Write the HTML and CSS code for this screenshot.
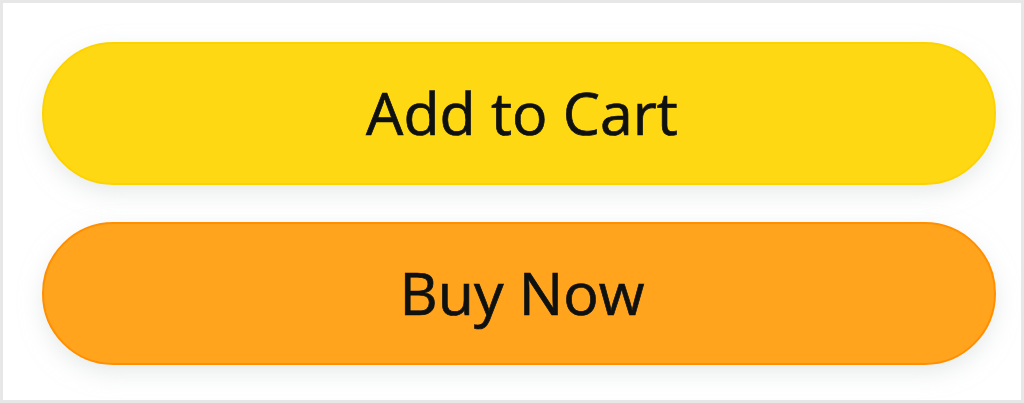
FILE: index.html
```html
<!DOCTYPE html>
<html lang="en">
<head>
    <meta charset="UTF-8">
    <meta name="viewport" content="width=device-width, initial-scale=1.0">
    <title>Buy Box</title>
    <link rel="stylesheet" href="styles.css">
</head>
<body>
    <div class="buy-box">
        <button class="buy-button add-to-cart">Add to Cart</button>
        <button class="buy-button buy-now">Buy Now</button>
    </div>
</body>
</html>
```

FILE: styles.css
```css
* {
    box-sizing: border-box;
}

html, body {
    margin: 0;
    padding: 0;
    background: #fff;
}

body {
    font-family: "Open Sans", "Noto Sans", Arial, sans-serif;
    color: #0f1111;
}

.buy-box {
    width: 1024px;
    height: 403px;
    border: 3px solid #e7e7e7;
    padding: 39px 25px 0 39px;
    display: flex;
    flex-direction: column;
    gap: 37px;
}

.buy-button {
    width: 954px;
    height: 143px;
    border-radius: 80px;
    font-family: inherit;
    font-size: 59px;
    font-weight: 400;
    -webkit-text-stroke: 0.7px #0f1111;
    color: #0f1111;
    cursor: pointer;
    box-shadow: 0 8px 22px rgba(213, 217, 217, 0.55);
    padding: 0 0 4px 6px;
}

.add-to-cart {
    background: #ffd814;
    border: 2px solid #fcd200;
}

.buy-now {
    background: #ffa41c;
    border: 2px solid #ff8f00;
}
```
